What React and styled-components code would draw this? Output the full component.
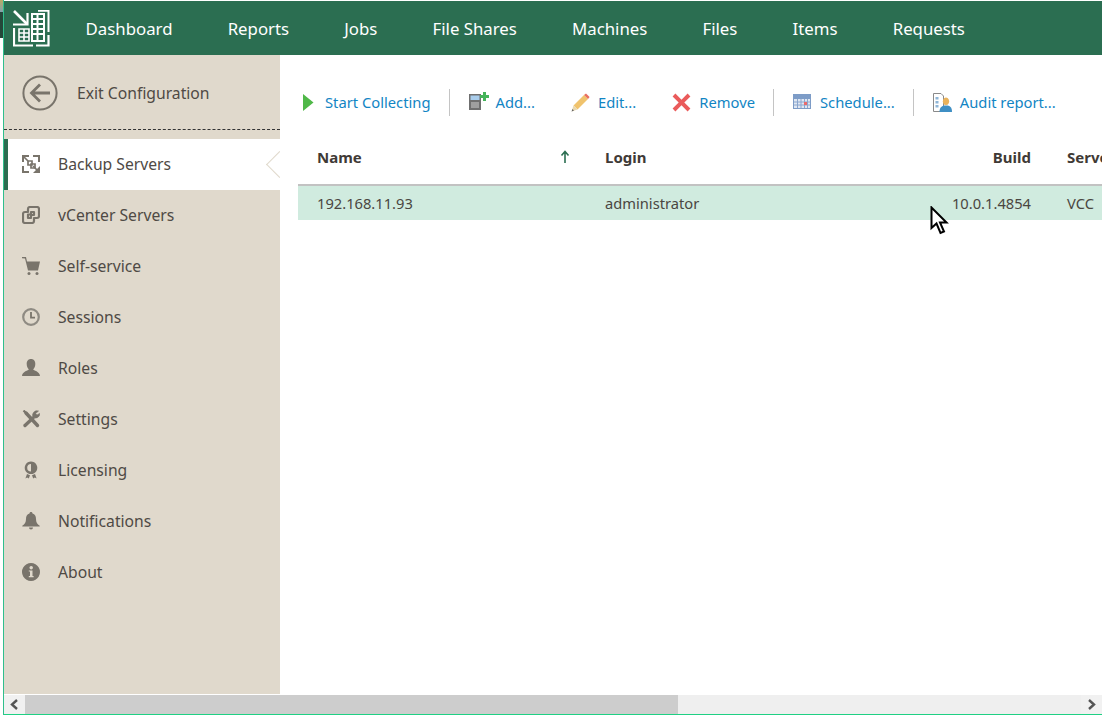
import React from 'react';
import styled, { createGlobalStyle } from 'styled-components';

const navItems = ['Dashboard', 'Reports', 'Jobs', 'File Shares', 'Machines', 'Files', 'Items', 'Requests'];

const GlobalStyle = createGlobalStyle`
  html, body {
    margin: 0;
    padding: 0;
    background: #fff;
  }
  * {
    box-sizing: border-box;
  }
`;

const Logo = () => (
  <svg width="37" height="37" viewBox="0 0 37 37" fill="none">
    <path d="M1 1 L14 14" stroke="#fff" strokeWidth="2.6" />
    <path d="M14.5 3 V14.5 H0" stroke="#fff" strokeWidth="2.2" />
    <path d="M1 18 V35.5 H20" stroke="#fff" strokeWidth="2.2" />
    <path d="M6 19 H16 V31 H6 Z M6 23 H16 M6 27 H16 M11 19 V31" stroke="#fff" strokeWidth="1.6" />
    <path d="M19 4 H31 V31 H19 Z M19 9 H31 M19 14 H31 M19 19 H31 M19 24 H31 M24.5 4 V31" stroke="#fff" strokeWidth="2" />
    <path d="M25 0.8 H35.5 V22" stroke="#fff" strokeWidth="2" />
    <path d="M23 35.5 H35.5 V25" stroke="#fff" strokeWidth="2.2" />
  </svg>
);

const sideIcons = {
  backup: (
    <g>
      <path d="M7 1 H1 V7 M11 1 H17 V7 M1 11 V17 H7" fill="none" stroke="#79746b" strokeWidth="2" />
      <path d="M6 6 H10 V10 H6 Z M9 9 H13 V13 H9 Z" fill="none" stroke="#79746b" strokeWidth="1.7" />
      <path d="M2 2 L6 6 M16 16 L11 11" stroke="#79746b" strokeWidth="1.7" />
      <path d="M11 18 H18 V11 Z" fill="#79746b" />
    </g>
  ),
  vcenter: (
    <path d="M6 6 V3 Q6 1 8 1 H15 Q17 1 17 3 V10 Q17 12 15 12 H12 V15 Q12 17 10 17 H3 Q1 17 1 15 V8 Q1 6 3 6 Z M6 8.5 H9 V12 H6 Z M9 6 H12 V9 H9 Z" fill="none" stroke="#79746b" strokeWidth="2.2" strokeLinejoin="round" />
  ),
  cart: (
    <g fill="#79746b">
      <path d="M0 0 H4 L5 4.5 H18 L16 13.5 H6 L3 1.5 L0 1.2 Z" />
      <circle cx="7" cy="16.4" r="1.5" />
      <circle cx="15" cy="16.4" r="1.5" />
    </g>
  ),
  clock: (
    <g fill="none" stroke="#8f8b83">
      <circle cx="9" cy="9" r="7.8" strokeWidth="2.2" />
      <path d="M9 4 V9.6 H13" stroke="#79746b" strokeWidth="1.8" />
    </g>
  ),
  user: (
    <path d="M9 0 C12 0 13.3 2.2 13.3 5 C13.3 7.5 12.2 9.4 11.2 10.3 C11.2 11.5 18 12.5 18 17 H0 C0 12.5 6.8 11.5 6.8 10.3 C5.8 9.4 4.7 7.5 4.7 5 C4.7 2.2 6 0 9 0 Z" fill="#79746b" />
  ),
  settings: (
    <g stroke="#79746b" fill="none">
      <path d="M4 3 L15.5 15.5" strokeWidth="3.4" strokeLinecap="round" />
      <path d="M1.5 0.5 L5 4" strokeWidth="2.2" />
      <path d="M11 8 L3 15.5" strokeWidth="3.4" strokeLinecap="round" />
      <path d="M16.5 1 A4.4 4.4 0 0 0 11 7 A4 4 0 0 0 17.6 3.4 L15 5 L13.6 3.6 Z" fill="#79746b" strokeWidth="0.6" />
    </g>
  ),
  license: (
    <g fill="#79746b">
      <path d="M9 0.5 A6.3 6.3 0 1 1 8.99 0.5 Z M9 3 A3.8 3.8 0 0 0 9 10.6 Z" fillRule="evenodd" />
      <path d="M5 13 L8 14.2 L6.8 17.6 L5.2 16.6 L3.4 17.4 Z M13 13 L10 14.2 L11.2 17.6 L12.8 16.6 L14.6 17.4 Z" />
    </g>
  ),
  bell: (
    <g fill="#79746b">
      <path d="M9 0 C10 0 10.5 0.7 10.5 1.5 C13 2.2 14 4.2 14 7 C14 10.5 15.2 12 17.7 13.8 V14.6 H0.3 V13.8 C2.8 12 4 10.5 4 7 C4 4.2 5 2.2 7.5 1.5 C7.5 0.7 8 0 9 0 Z" />
      <path d="M7 15.5 H11 A2 2 0 0 1 7 15.5 Z" />
    </g>
  ),
  info: (
    <path fillRule="evenodd" fill="#79746b" d="M9 0 A9 9 0 1 1 8.99 0 Z M9.2 3 A1.7 1.7 0 1 0 9.21 3 Z M6.8 7.4 V8.6 H8 V13 H6.8 V14.2 H11.6 V13 H10.5 V7.4 Z" />
  ),
};

const sideItems = [
  { label: 'Backup Servers', icon: 'backup', active: true },
  { label: 'vCenter Servers', icon: 'vcenter' },
  { label: 'Self-service', icon: 'cart' },
  { label: 'Sessions', icon: 'clock' },
  { label: 'Roles', icon: 'user' },
  { label: 'Settings', icon: 'settings' },
  { label: 'Licensing', icon: 'license' },
  { label: 'Notifications', icon: 'bell' },
  { label: 'About', icon: 'info' },
];

const toolIcons = {
  play: <path d="M1 0 L11.5 8.5 L1 17 Z" fill="#4fb848" />,
  add: (
    <g>
      <path d="M0 2 H12 V18 H0 Z" fill="#6f6f6f" />
      <path d="M1.5 3.5 H10.5 V8 H1.5 Z" fill="#a9cdec" />
      <path d="M2 11 H10 M2 13 H10 M2 15 H10" stroke="#d0d0d0" strokeWidth="1" />
      <path d="M14 0 H17 V3 H20 V6 H17 V9 H14 V6 H11 V3 H14 Z" fill="#45b35a" />
    </g>
  ),
  edit: (
    <g>
      <path d="M2.5 12.5 L13 2 L17 6 L6.5 16.5 Z" fill="#f0c36d" />
      <path d="M13 2 L15 0.4 L18.6 4 L17 6 Z" fill="#e96f5f" />
      <path d="M2.5 12.5 L6.5 16.5 L0.6 18.4 Z" fill="#e8d8b0" />
      <path d="M1.4 16 L3 17.6 L0.6 18.4 Z" fill="#666" />
    </g>
  ),
  remove: <path d="M3.4 0.6 L9.5 6.7 L15.6 0.6 L18.4 3.4 L12.3 9.5 L18.4 15.6 L15.6 18.4 L9.5 12.3 L3.4 18.4 L0.6 15.6 L6.7 9.5 L0.6 3.4 Z" fill="#ea5b5b" />,
  schedule: (
    <g>
      <path d="M0 1 H18 V16 H0 Z" fill="#7d9cc7" />
      <path d="M1 6 H17 V15 H1 Z" fill="#dfe7f2" />
      <path d="M1 9 H17 M1 12 H17 M4.5 6 V15 M8 6 V15 M11.5 6 V15 M14.5 6 V15" stroke="#8aa6cf" strokeWidth="1" />
      <path d="M11 9 H14 V12 H11 Z" fill="#ea6a6a" />
    </g>
  ),
  audit: (
    <g>
      <path d="M0.5 0.5 H8 L10.5 3 V18.5 H0.5 Z" fill="#fff" stroke="#8a8a8a" />
      <path d="M2.5 4 H5.5 V6.5 H2.5 Z M2.5 8 H5.5 V10.5 H2.5 Z M2.5 12 H5.5 V14.5 H2.5 Z" fill="#8fb6d8" />
      <path d="M13 4.5 A3.2 3.8 0 1 1 12.99 4.5 Z" fill="#eab35c" />
      <path d="M6.5 19 C6.5 14 9 12.5 13 12.5 C17 12.5 19 14 19 19 Z" fill="#3f8fc4" />
    </g>
  ),
};

const toolbar = [
  { label: 'Start Collecting', icon: 'play', size: 17, gap: 6 },
  { sep: true },
  { label: 'Add...', icon: 'add', size: 20, gap: 7 },
  { label: 'Edit...', icon: 'edit', size: 19, gap: 8 },
  { label: 'Remove', icon: 'remove', size: 19, gap: 8 },
  { sep: true },
  { label: 'Schedule...', icon: 'schedule', size: 18, gap: 9 },
  { sep: true },
  { label: 'Audit report...', icon: 'audit', size: 19, gap: 8 },
];

const App = () => (
  <>
    <GlobalStyle />
    <DesktopSliver />
    <Window>
      <TopBar>
        <LogoBox>
          <Logo />
        </LogoBox>
        <TopNav>
          {navItems.map((item) => (
            <TopLink key={item}>{item}</TopLink>
          ))}
        </TopNav>
      </TopBar>
      <Body>
        <SideBar>
          <ExitBox>
            <svg width="36" height="36" viewBox="0 0 36 36" fill="none">
              <circle cx="18" cy="18" r="16.6" stroke="#79746b" strokeWidth="2" />
              <path d="M28 18 H10 M18 9.5 L9.5 18 L18 26.5" stroke="#79746b" strokeWidth="2.8" />
            </svg>
            <ExitText>Exit Configuration</ExitText>
          </ExitBox>
          <SideList>
            {sideItems.map((item) => (
              <SideItem key={item.label} $active={item.active}>
                <svg width="18" height="18" viewBox="0 0 18 18">
                  {sideIcons[item.icon]}
                </svg>
                <SideText>{item.label}</SideText>
              </SideItem>
            ))}
          </SideList>
        </SideBar>
        <Main>
          <Toolbar>
            {toolbar.map((tool, i) =>
              tool.sep ? (
                <ToolSep key={i} />
              ) : (
                <ToolButton key={tool.label} $gap={tool.gap}>
                  <svg width={tool.size} height={tool.size} viewBox={`0 0 ${tool.size} ${tool.size}`}>
                    {toolIcons[tool.icon]}
                  </svg>
                  {tool.label}
                </ToolButton>
              )
            )}
          </Toolbar>
          <Table>
            <HeadRow>
              <NameHead>
                Name
                <svg width="10" height="14" viewBox="0 0 10 14" fill="none">
                  <path d="M5 13 V2 M1.5 5.5 L5 1.5 L8.5 5.5" stroke="#2b6e51" strokeWidth="1.6" />
                </svg>
              </NameHead>
              <Cell>Login</Cell>
              <BuildCell>Build</BuildCell>
              <Cell>Server</Cell>
            </HeadRow>
            <DataRow>
              <FirstCell>192.168.11.93</FirstCell>
              <Cell>administrator</Cell>
              <BuildCell>10.0.1.4854</BuildCell>
              <Cell>VCC</Cell>
            </DataRow>
          </Table>
        </Main>
      </Body>
      <ScrollBar>
        <ScrollBtn>
          <svg width="9" height="11" viewBox="0 0 9 11" fill="none">
            <path d="M7 1 L2 5.5 L7 10" stroke="#555" strokeWidth="2.4" />
          </svg>
        </ScrollBtn>
        <ScrollThumb />
        <ScrollTrack />
        <ScrollBtn>
          <svg width="9" height="11" viewBox="0 0 9 11" fill="none">
            <path d="M2 1 L7 5.5 L2 10" stroke="#555" strokeWidth="2.4" />
          </svg>
        </ScrollBtn>
      </ScrollBar>
      <Cursor>
        <svg width="20" height="30" viewBox="0 0 20 30">
          <path d="M1.5 1.5 V22 L6.5 17.5 L10.5 27 L14 25.5 L10 16.5 L16.5 16.5 Z" fill="#fff" stroke="#000" strokeWidth="2" />
        </svg>
      </Cursor>
    </Window>
  </>
);

const DesktopSliver = styled.div`
  position: absolute;
  left: 0;
  top: 0;
  width: 3px;
  height: 38px;
  background: linear-gradient(#b9a964 0, #7fa3ad 12px, #24483a 12px);
`;

const Window = styled.div`
  position: relative;
  width: 1102px;
  height: 715px;
  margin-left: 3px;
  max-width: calc(100vw - 3px);
  display: flex;
  flex-direction: column;
  overflow: hidden;
  border-left: 1px solid #2fbf8c;
  border-bottom: 1px solid #1fd084;
  padding-top: 1px;
  font-family: "Noto Sans", "Open Sans", sans-serif;
`;

const TopBar = styled.div`
  height: 54px;
  flex: none;
  display: flex;
  align-items: center;
  background: #2b6e51;
`;

const LogoBox = styled.div`
  width: 54px;
  padding-left: 9px;
  display: flex;
`;

const TopNav = styled.div`
  display: flex;
`;

const TopLink = styled.span`
  padding: 0 27.6px;
  color: #fff;
  font-size: 16.8px;
  white-space: nowrap;
`;

const Body = styled.div`
  flex: 1;
  display: flex;
  min-height: 0;
`;

const SideBar = styled.div`
  width: 276px;
  flex: none;
  background: #e0d9cc;
`;

const ExitBox = styled.div`
  height: 75px;
  display: flex;
  align-items: center;
  gap: 19px;
  padding: 1px 0 0 18px;
  border-bottom: 1px dashed #333;
`;

const ExitText = styled.span`
  color: #4f4a45;
  font-size: 15.7px;
`;

const SideList = styled.div`
  padding-top: 9px;
`;

const SideItem = styled.div`
  position: relative;
  height: 51px;
  display: flex;
  align-items: center;
  gap: 18px;
  padding-bottom: 2px;
  overflow: hidden;
  background: ${(p) => (p.$active ? '#fff' : 'transparent')};
  border-left: ${(p) => (p.$active ? '4px solid #2b6e51' : 'none')};
  padding-left: ${(p) => (p.$active ? '14px' : '18px')};

  ${(p) =>
    p.$active &&
    `
    &::after {
      content: '';
      position: absolute;
      right: -9px;
      top: 16px;
      width: 18px;
      height: 18px;
      background: #fff;
      border-left: 1px solid #e0d9cc;
      border-bottom: 1px solid #e0d9cc;
      transform: rotate(45deg);
    }
  `}
`;

const SideText = styled.span`
  color: #4f4a45;
  font-size: 15.7px;
`;

const Main = styled.div`
  flex: 1;
  min-width: 0;
  padding: 28px 0 0 18px;
  overflow: hidden;
`;

const Toolbar = styled.div`
  height: 38px;
  display: flex;
  align-items: center;
  padding-left: 4px;
`;

const ToolButton = styled.div`
  display: flex;
  align-items: center;
  gap: ${(p) => p.$gap}px;
  margin-right: 36px;
  color: #1285c4;
  font-size: 14.75px;
  white-space: nowrap;
`;

const ToolSep = styled.div`
  width: 1px;
  height: 27px;
  margin: 0 19px 0 -18px;
  background: #c4c4c4;
`;

const Table = styled.div`
  margin-top: 9px;
  width: 900px;
`;

const RowBase = styled.div`
  display: grid;
  grid-template-columns: 289px 300px 162px 1fr;
  align-items: center;
  white-space: nowrap;
`;

const HeadRow = styled(RowBase)`
  height: 56px;
  border-bottom: 2px solid #c2c2c2;
  color: #3f3a36;
  font-size: 15px;
  font-weight: 700;
`;

const DataRow = styled(RowBase)`
  height: 34px;
  background: #d0ebdf;
  color: #4a4641;
  font-size: 14.7px;
`;

const Cell = styled.div`
  padding-left: 18px;
`;

const FirstCell = styled(Cell)`
  padding-left: 19px;
`;

const NameHead = styled(FirstCell)`
  display: flex;
  justify-content: space-between;
  align-items: center;
  padding-right: 17px;
`;

const BuildCell = styled.div`
  text-align: right;
  padding-right: 18px;
`;

const ScrollBar = styled.div`
  height: 19px;
  flex: none;
  display: flex;
  margin-top: 1px;
  background: #efefef;
`;

const ScrollBtn = styled.div`
  width: 21px;
  flex: none;
  display: flex;
  align-items: center;
  justify-content: center;
  background: #f1f1f1;
`;

const ScrollThumb = styled.div`
  width: 653px;
  background: #cdcdcd;
`;

const ScrollTrack = styled.div`
  flex: 1;
`;

const Cursor = styled.div`
  position: absolute;
  left: 926px;
  top: 206px;
  line-height: 0;
`;

export default App;
